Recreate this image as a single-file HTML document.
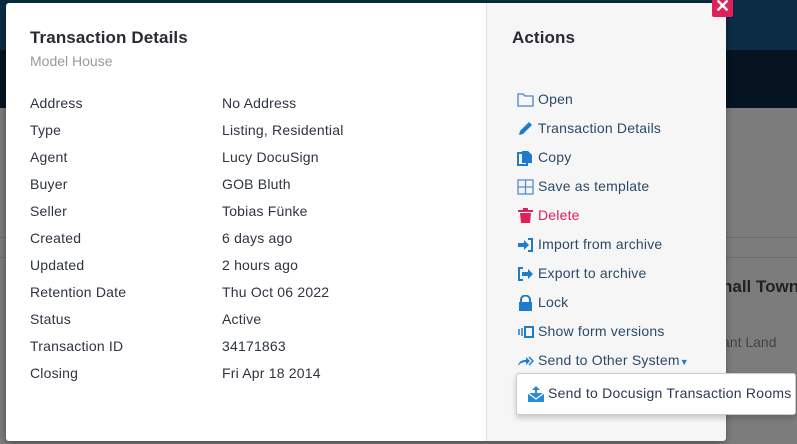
<!DOCTYPE html>
<html><head><style>
body{margin:0;width:797px;height:444px;overflow:hidden;position:relative;font-family:"Liberation Sans",sans-serif;background:#7c7c7c}
.bg1{position:absolute;left:0;top:0;width:797px;height:50px;background:#0b2c44}
.bg2{position:absolute;left:0;top:50px;width:797px;height:58px;background:#051420}
.ln{position:absolute;left:0;width:797px;height:1px;background:#6c6c6c}
.modal{position:absolute;left:6px;top:3px;width:719px;height:438px;background:#fff;border-radius:3px;box-shadow:0 2px 8px rgba(0,0,0,.4)}
.right{position:absolute;left:480px;top:0;width:239px;height:438px;background:#f6f6f6;border-left:1px solid #e2e2e2;border-radius:0 3px 3px 0}
h2{position:absolute;margin:0;font-size:17px;font-weight:bold;color:#2a2a33;letter-spacing:0.1px}
.sub{position:absolute;left:24px;top:50px;font-size:14px;color:#999}
.row{position:absolute;left:24px;font-size:14px;color:#2e3440;letter-spacing:0.2px;white-space:nowrap}
.row span{position:absolute;left:192px;white-space:nowrap}
.act{position:absolute;left:30px;font-size:14px;color:#2c4a68;white-space:nowrap;letter-spacing:0.2px}
.act svg{position:absolute;left:0;top:1px}
.act b{font-weight:normal;position:absolute;left:21px;top:0}
.close{position:absolute;left:712px;top:-3px;width:21px;height:20px;background:#e0205a;border-radius:2px;color:#fff;font-size:18px;font-weight:bold;text-align:center;line-height:19px}
.dd{position:absolute;left:516px;top:373px;width:278px;height:40px;background:#fff;border:1px solid #ccc;border-radius:3px;box-shadow:0 3px 6px rgba(0,0,0,.2);font-size:14px;color:#2c3a50;letter-spacing:0.25px;white-space:nowrap}
.bgt{position:absolute;font-size:17px;color:#222;font-weight:bold;white-space:nowrap}
</style></head><body>
<div class="bg1"></div><div class="bg2"></div>
<div class="ln" style="top:237px"></div><div class="ln" style="top:257px"></div>
<div class="bgt" style="left:722px;top:277px">nall Town</div>
<div style="position:absolute;left:722px;top:334px;font-size:14px;color:#444;white-space:nowrap">ant Land</div>
<div class="modal">
<h2 style="left:24px;top:25px">Transaction Details</h2>
<div class="sub">Model House</div>
<div class="row" style="top:92px">Address<span>No Address</span></div>
<div class="row" style="top:119px">Type<span>Listing, Residential</span></div>
<div class="row" style="top:146px">Agent<span>Lucy DocuSign</span></div>
<div class="row" style="top:173px">Buyer<span>GOB Bluth</span></div>
<div class="row" style="top:200px">Seller<span>Tobias Fünke</span></div>
<div class="row" style="top:227px">Created<span>6 days ago</span></div>
<div class="row" style="top:254px">Updated<span>2 hours ago</span></div>
<div class="row" style="top:281px">Retention Date<span>Thu Oct 06 2022</span></div>
<div class="row" style="top:308px">Status<span>Active</span></div>
<div class="row" style="top:335px">Transaction ID<span>34171863</span></div>
<div class="row" style="top:362px">Closing<span>Fri Apr 18 2014</span></div>
<div class="right">
<h2 style="left:25px;top:25px">Actions</h2>
<div class="act" style="top:88px"><svg width="17" height="15"><path d="M1 2h5l2 2h8v10H1z" fill="none" stroke="#4a86c8" stroke-width="1.3"/></svg><b>Open</b></div>
<div class="act" style="top:117px"><svg width="17" height="15"><path d="M2 14l1-4 9-9 3 3-9 9z" fill="#1f7ccc"/></svg><b>Transaction Details</b></div>
<div class="act" style="top:146px"><svg width="17" height="16"><rect x="1" y="3" width="9" height="12" fill="#fff" stroke="#1f7ccc" stroke-width="2"/><path d="M5 1h6l4 4v8H5z" fill="#1f7ccc"/></svg><b>Copy</b></div>
<div class="act" style="top:175px"><svg width="17" height="16"><rect x="1" y="1" width="15" height="14" fill="none" stroke="#5a8ccc" stroke-width="1.3"/><path d="M8.5 1v14M1 8h15" stroke="#5a8ccc" stroke-width="1.3"/></svg><b>Save as template</b></div>
<div class="act" style="top:204px;color:#e0205a"><svg width="17" height="16"><path d="M1 2h15v2H1zM6 0h5v2H6zM3 5h11l-1 10H4z" fill="#e0205a"/></svg><b>Delete</b></div>
<div class="act" style="top:233px"><svg width="17" height="16"><path d="M1 6h6V3l5 5-5 5v-3H1z" fill="#1f7ccc"/><path d="M11 2h4v12h-4" fill="none" stroke="#1f7ccc" stroke-width="2"/></svg><b>Import from archive</b></div>
<div class="act" style="top:262px"><svg width="17" height="16"><path d="M6 2H2v12h4" fill="none" stroke="#1f7ccc" stroke-width="2"/><path d="M5 6h6V3l5 5-5 5v-3H5z" fill="#1f7ccc"/></svg><b>Export to archive</b></div>
<div class="act" style="top:291px"><svg width="17" height="16"><path d="M4 7V5a4.5 4.5 0 0 1 9 0v2" fill="none" stroke="#1f7ccc" stroke-width="2"/><rect x="2" y="7" width="13" height="9" fill="#1f7ccc"/></svg><b>Lock</b></div>
<div class="act" style="top:320px"><svg width="17" height="16"><rect x="8" y="3" width="8" height="10" fill="none" stroke="#1f7ccc" stroke-width="2"/><path d="M2 5v6M5 4v8" stroke="#1f7ccc" stroke-width="1.5"/></svg><b>Show form versions</b></div>
<div class="act" style="top:349px"><svg width="17" height="16"><path d="M1 13c1-5 4-6 8-6V4l4 4-4 4V9c-3 0-6 1-8 4z" fill="#1f7ccc"/><path d="M12 4l4 4-4 4" fill="none" stroke="#1f7ccc" stroke-width="1.5"/></svg><b>Send to Other System<span style="font-size:9px;color:#1f7ccc">▼</span></b></div>
</div>
</div>
<div class="close">✕</div>
<div class="dd"><svg style="position:absolute;left:10px;top:11px" width="18" height="18"><path d="M1 8h16v9H1z" fill="#2a8ad8"/><path d="M1 8l8 6 8-6" fill="none" stroke="#fff" stroke-width="1.2"/><path d="M9 1l-4 4h3v4h2V5h3z" fill="#2a8ad8"/></svg><span style="position:absolute;left:31px;top:11px">Send to Docusign Transaction Rooms</span></div>
</body></html>
